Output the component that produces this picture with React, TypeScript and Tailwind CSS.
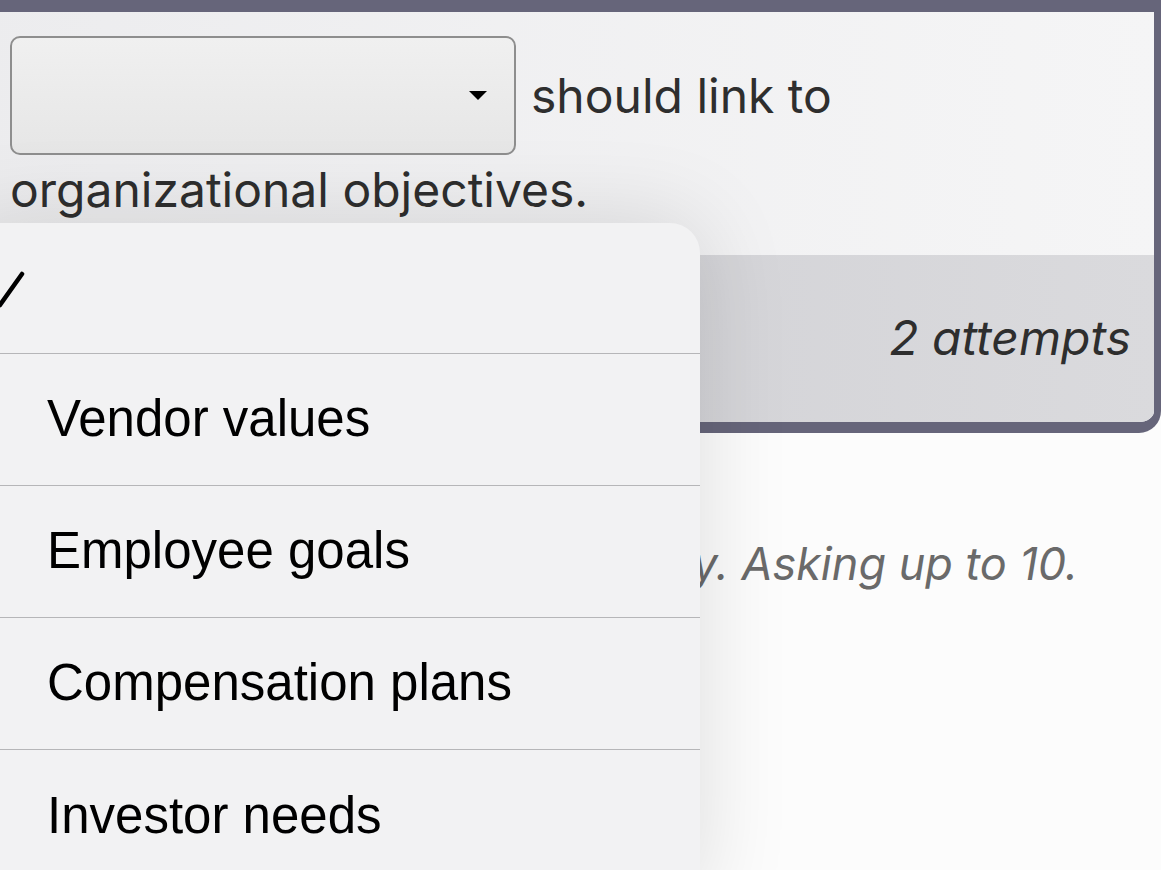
import React from "react";

export default function App() {
  const items = ["Vendor values", "Employee goals", "Compensation plans", "Investor needs"];
  return (
    <div className="relative w-[1161px] h-[870px] overflow-hidden bg-[#fcfcfc]" style={{ fontFamily: "Inter, 'Noto Sans', sans-serif" }}>
      {/* Card */}
      <div className="ml-[-30px] w-[1191px] rounded-br-[22px] border-t-[12px] border-r-[7px] border-b-[11px] border-[#66657a] overflow-hidden">
        <div className="h-[243px] bg-gradient-to-r from-[#ececee] to-[#f5f5f6] pl-[40px]">
          <div className="flex items-center pt-[24px]">
            <div className="relative w-[506px] h-[119px] rounded-[10px] border-[2.5px] border-[#8e8e8e] bg-gradient-to-b from-[#f0f0f0] to-[#e6e6e6]">
              <svg className="absolute left-[457px] top-[53px]" width="18" height="9" viewBox="0 0 18 9">
                <polygon points="0,0 18,0 9,9" fill="#000" />
              </svg>
            </div>
            <span className="ml-[15px] text-[48px] leading-[53px] text-[#2e2e2e]">should link to</span>
          </div>
          <div className="mt-[8px] text-[48px] leading-[53px] text-[#2e2e2e]">organizational objectives.</div>
        </div>
        <div className="h-[167px] bg-gradient-to-r from-[#bdbdc1] via-[#d3d3d7] to-[#dadadd] flex justify-end pr-[23px] pt-[56px]">
          <span className="italic text-[48px] leading-[53px] text-[#2e2e2e]">2 attempts</span>
        </div>
      </div>

      {/* Below card text */}
      <div className="flex justify-end pr-[83px] mt-[104px]">
        <span className="italic text-[45px] leading-[53px] text-[#6a6a6a]">correctly. Asking up to 10.</span>
      </div>

      {/* Dropdown menu */}
      <div
        className="absolute left-[-40px] top-[223px] w-[740px] h-[680px] rounded-[30px] bg-[#f2f2f3] shadow-[0_0_90px_rgba(0,0,0,0.13)] overflow-hidden"
        style={{ fontFamily: "'Liberation Sans', Arial, sans-serif" }}
      >
        <div className="relative h-[131px] border-b border-[#b6b6b8]">
          <svg className="absolute left-0 top-0" width="80" height="131" viewBox="0 0 80 131">
            <polyline points="26,67 40,82 62,51" fill="none" stroke="#000" strokeWidth="4.5" strokeLinecap="round" strokeLinejoin="round" />
          </svg>
        </div>
        {items.map((t, i) => (
          <div
            key={t}
            className={
              i < items.length - 1
                ? "h-[132px] flex items-center pl-[87px] border-b border-[#b6b6b8] text-[51px] text-black"
                : "h-[132px] flex items-center pl-[87px] text-[51px] text-black"
            }
          >
            {t}
          </div>
        ))}
      </div>
    </div>
  );
}
